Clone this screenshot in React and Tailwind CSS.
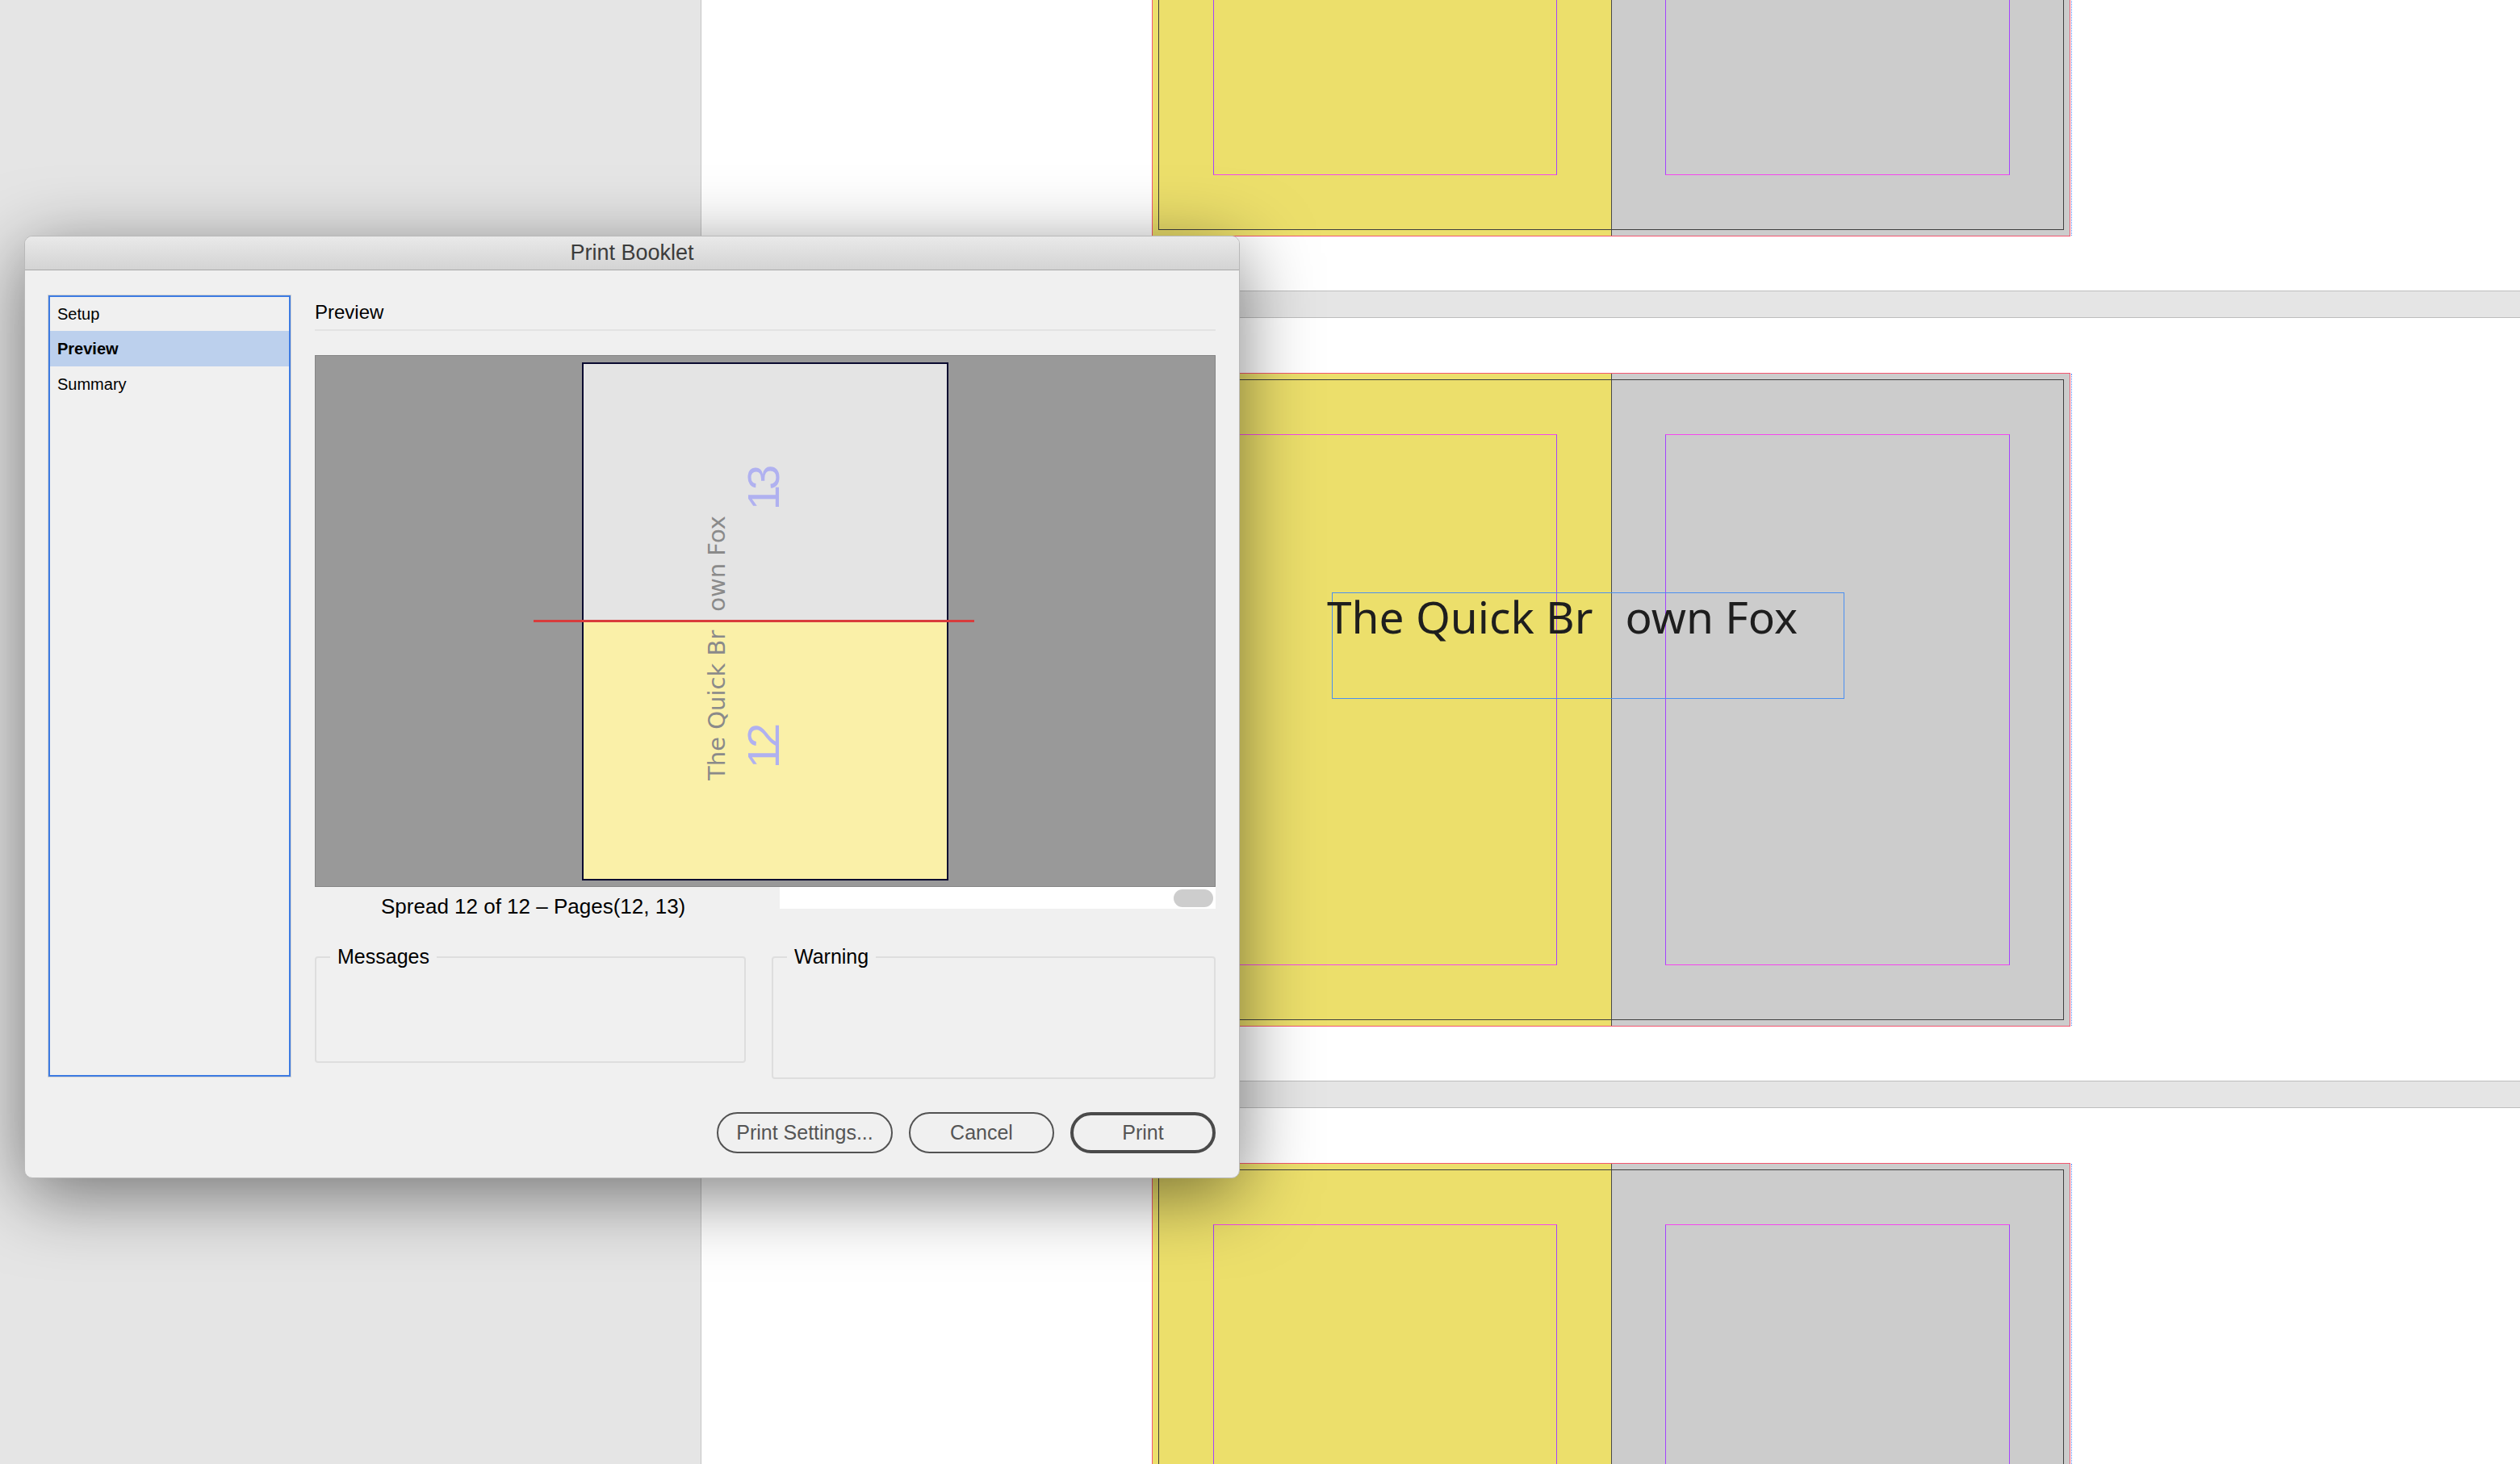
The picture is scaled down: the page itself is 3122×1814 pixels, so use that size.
import React from 'react'

const Band = () => (
  <div className="mt-[67px] mb-[68px] h-[34px] shrink-0 bg-[#e5e5e5] border-y border-[#bdbdbd]" />
)

const Spread = ({ children }) => (
  <div className="pl-[558px] shrink-0">
    <div className="relative w-[1138px] h-[810px] border border-[#f2566f] flex">
      {/* left page */}
      <div className="relative w-[568px] h-full bg-[#ecdf6b]">
        <div className="absolute left-[75px] right-[67px] top-[75px] bottom-[75px] border border-y-[#f546ee] border-x-[#a443ff]" />
      </div>
      {/* right page */}
      <div className="relative flex-1 h-full bg-[#cccccc] border-l border-[#4a4a4a]">
        <div className="absolute left-[66px] right-[74px] top-[75px] bottom-[75px] border border-y-[#f546ee] border-x-[#a443ff]" />
      </div>
      {/* trim */}
      <div className="absolute inset-[7px] border border-[#3f3f3f]" />
      <div className="absolute -right-[3px] top-0 bottom-0 border-r border-dotted border-[#5a88ff]" />
      {children}
    </div>
  </div>
)

const GroupBox = ({ label }) => (
  <div className="relative h-full border-2 border-[#dedede] rounded-[4px]">
    <span className="absolute left-[17px] -top-[17px] px-[9px] bg-[#f0f0f0] text-[25px] leading-[30px] text-black">
      {label}
    </span>
  </div>
)

const Dialog = () => (
  <div className="absolute left-[30px] top-[292px] w-[1506px] h-[1168px] flex flex-col bg-[#f0f0f0] border border-[#b9b9b9] rounded-[10px] overflow-hidden shadow-[0_20px_90px_rgba(0,0,0,0.5)] font-['Liberation_Sans',Arial,sans-serif]">
    {/* Title bar */}
    <div className="h-[42px] shrink-0 flex items-center justify-center bg-gradient-to-b from-[#e9e9e9] to-[#d4d4d4] border-b border-[#a8a8a8]">
      <span className="text-[27px] text-[#3c3c3c]">Print Booklet</span>
    </div>

    <div className="flex-1 flex flex-col pt-[31px] px-[29px] pb-[30px]">
      <div className="h-[971px] shrink-0 flex gap-[30px]">
        {/* Sidebar */}
        <div className="w-[300px] h-[968px] shrink-0 border-2 border-[#3d7be2] outline outline-1 outline-[#d4d4d4] bg-[#f0f0f0] text-[20px] text-black">
          <div className="h-[42px] flex items-center pl-[9px]">Setup</div>
          <div className="h-[44px] flex items-center pl-[9px] bg-[#bcd0ed] font-bold">Preview</div>
          <div className="h-[44px] flex items-center pl-[9px]">Summary</div>
        </div>

        {/* Panel */}
        <div className="flex-1 flex flex-col">
          <div className="h-[44px] shrink-0 flex items-center border-b-2 border-[#e3e3e3] text-[24px] text-black">
            Preview
          </div>

          <div className="mt-[30px] h-[659px] shrink-0 bg-[#999999] border border-[#858585] flex items-center justify-center relative">
            <div className="relative w-[454px] h-[642px] border-2 border-[#0a0a30] flex flex-col">
              <div className="h-[319px] bg-[#e4e4e4]" />
              <div className="flex-1 bg-[#faf0a8]" />
              <div className="absolute left-[165px] top-[352px] -translate-x-1/2 -translate-y-1/2 -rotate-90 whitespace-nowrap flex gap-[23px] font-['DejaVu_Sans',sans-serif] text-[29px] leading-none text-[#8a8a8a]">
                <span>The Quick Br</span>
                <span>own Fox</span>
              </div>
              <div className="absolute left-[223px] top-[156px] -translate-x-1/2 -translate-y-1/2 -rotate-90 whitespace-nowrap text-[56px] leading-none tracking-[-6px] text-[#b0b1f0]">
                13
              </div>
              <div className="absolute left-[223px] top-[476px] -translate-x-1/2 -translate-y-1/2 -rotate-90 whitespace-nowrap text-[56px] leading-none tracking-[-6px] text-[#b0b1f0]">
                12
              </div>
            </div>
            <div className="absolute left-[270px] top-[327px] w-[546px] h-[3px] bg-[#d83c3c]" />
          </div>

          <div className="h-[46px] shrink-0 flex justify-between">
            <div className="pl-[82px] self-center pt-[1px] text-[26px] leading-none text-black whitespace-nowrap">
              Spread 12 of 12 – Pages(12, 13)
            </div>
            <div className="w-[540px] h-[27px] bg-white flex items-center justify-end pr-[3px]">
              <div className="w-[49px] h-[22px] rounded-full bg-[#cdcdcd]" />
            </div>
          </div>

          <div className="mt-[40px] h-[152px] shrink-0 flex gap-[32px] items-start">
            <div className="w-[534px] h-[132px]">
              <GroupBox label="Messages" />
            </div>
            <div className="flex-1 h-[152px]">
              <GroupBox label="Warning" />
            </div>
          </div>
        </div>
      </div>

      {/* Buttons */}
      <div className="mt-[41px] flex justify-end gap-[20px] text-[25px] text-[#555555]">
        <button className="w-[218px] h-[51px] rounded-full border-2 border-[#525252] flex items-center justify-center">
          Print Settings...
        </button>
        <button className="w-[180px] h-[51px] rounded-full border-2 border-[#525252] flex items-center justify-center">
          Cancel
        </button>
        <button className="w-[180px] h-[51px] rounded-full border-4 border-[#4a4a4a] flex items-center justify-center">
          Print
        </button>
      </div>
    </div>
  </div>
)

export default function App() {
  return (
    <div className="relative w-[3122px] h-[1814px] overflow-hidden flex bg-white">
      <div className="w-[869px] h-full shrink-0 bg-[#e5e5e5] border-r border-[#c4c4c4]" />
      <div className="flex-1 flex flex-col">
        <div className="mt-[-517px]">
          <Spread />
        </div>
        <Band />
        <Spread>
          <div className="absolute left-[222px] top-[271px] w-[635px] h-[132px] border border-[#4a8ff0]">
            <div className="absolute left-[-7px] top-[1px] flex gap-[40px] whitespace-nowrap font-['Noto_Sans',sans-serif] text-[55px] leading-none text-[#1e1e1e]">
              <span>The Quick Br</span>
              <span>own Fox</span>
            </div>
          </div>
        </Spread>
        <Band />
        <Spread />
      </div>
      <Dialog />
    </div>
  )
}
